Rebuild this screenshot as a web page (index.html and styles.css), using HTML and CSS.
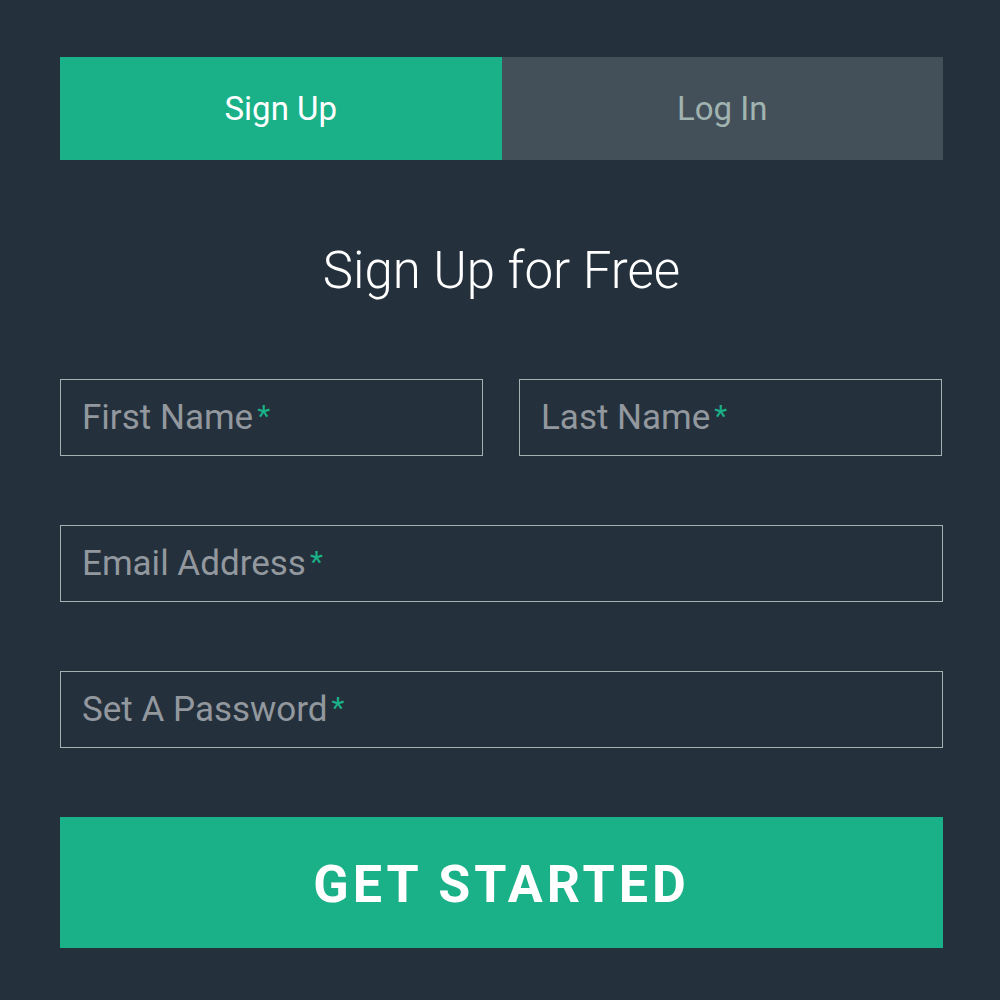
FILE: index.html
```html
<!DOCTYPE html>
<html lang="en">
<head>
<meta charset="utf-8">
<title>Sign Up</title>
<link rel="stylesheet" href="styles.css">
</head>
<body>
<div class="form">
  <div class="tabs">
    <div class="tab active">Sign Up</div>
    <div class="tab">Log In</div>
  </div>
  <h1 class="title">Sign Up for Free</h1>
  <div class="row">
    <div class="field"><span class="label">First Name<span class="req">*</span></span></div>
    <div class="field"><span class="label">Last Name<span class="req">*</span></span></div>
  </div>
  <div class="field"><span class="label">Email Address<span class="req">*</span></span></div>
  <div class="field"><span class="label">Set A Password<span class="req">*</span></span></div>
  <div class="button">GET STARTED</div>
</div>
</body>
</html>
```

FILE: styles.css
```css
html, body {
  margin: 0;
  padding: 0;
  background: #24303c;
}
body {
  font-family: Roboto, "Noto Sans", sans-serif;
  width: 1000px;
  height: 1000px;
}
.form {
  width: 883px;
  margin-left: 60px;
  padding-top: 57px;
  display: flex;
  flex-direction: column;
}
.tabs {
  display: flex;
  height: 103px;
}
.tab {
  flex: 1;
  display: flex;
  align-items: center;
  justify-content: center;
  font-size: 33px;
  color: #a0b3b0;
  background: #435059;
}
.tab.active {
  background: #1ab188;
  color: #ffffff;
}
.title {
  margin: 81px 0 0;
  height: 60px;
  line-height: 60px;
  font-size: 51px;
  font-weight: 300;
  color: #ffffff;
  text-align: center;
}
.row {
  display: flex;
  gap: 36px;
  margin-top: 78px;
  padding-right: 1px;
}
.row .field {
  flex: 1;
  margin-top: 0;
}
.field {
  box-sizing: border-box;
  height: 77px;
  border: 1px solid #a0b3b0;
  display: flex;
  align-items: center;
  padding-left: 21px;
  margin-top: 69px;
}
.label {
  font-size: 35px;
  color: #92989e;
}
.req {
  color: #1ab188;
  margin-left: 4px;
  font-size: 30px;
  position: relative;
  top: -3px;
}
.button {
  margin-top: 69px;
  height: 131px;
  background: #1ab188;
  color: #ffffff;
  display: flex;
  align-items: center;
  justify-content: center;
  font-size: 52px;
  font-weight: 700;
  letter-spacing: 4px;
  padding-top: 3px;
  box-sizing: border-box;
}
```
